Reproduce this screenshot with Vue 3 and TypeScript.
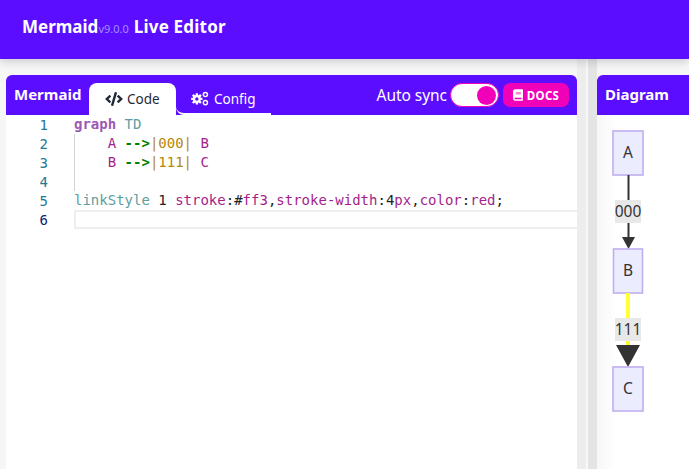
<script setup lang="ts">
interface Tok { t: string; c: string }
const lines: { n: number; toks: Tok[]; active?: boolean }[] = [
  { n: 1, toks: [{ t: 'graph', c: 'kw' }, { t: ' ', c: '' }, { t: 'TD', c: 'teal' }] },
  { n: 2, toks: [{ t: '    ', c: '' }, { t: 'A', c: 'node' }, { t: ' ', c: '' }, { t: '-->', c: 'arrow' }, { t: '|000|', c: 'label' }, { t: ' ', c: '' }, { t: 'B', c: 'node' }] },
  { n: 3, toks: [{ t: '    ', c: '' }, { t: 'B', c: 'node' }, { t: ' ', c: '' }, { t: '-->', c: 'arrow' }, { t: '|111|', c: 'label' }, { t: ' ', c: '' }, { t: 'C', c: 'node' }] },
  { n: 4, toks: [] },
  { n: 5, toks: [{ t: 'linkStyle', c: 'teal' }, { t: ' 1 ', c: '' }, { t: 'stroke', c: 'node' }, { t: ':#', c: '' }, { t: 'ff3', c: 'node' }, { t: ',', c: '' }, { t: 'stroke-width', c: 'node' }, { t: ':4', c: '' }, { t: 'px', c: 'node' }, { t: ',', c: '' }, { t: 'color', c: 'node' }, { t: ':', c: '' }, { t: 'red', c: 'node' }, { t: ';', c: '' }] },
  { n: 6, toks: [], active: true },
]
</script>

<template>
  <div class="page">
    <header class="navbar">
      <span class="brand">Mermaid</span><span class="version">v9.0.0</span><span class="brand brand-tail">Live Editor</span>
    </header>
    <main class="workspace">
      <section class="panel editor">
        <div class="panel-head">
          <span class="panel-title">Mermaid</span>
          <div class="tabs">
            <div class="tab active">
              <svg class="ico code-ico" viewBox="0 0 640 512" aria-hidden="true"><path d="M278.9 511.5l-61-17.7c-6.4-1.8-10-8.5-8.2-14.9L346.2 8.7c1.8-6.4 8.5-10 14.9-8.2l61 17.7c6.4 1.8 10 8.5 8.2 14.9L293.8 503.3c-1.9 6.4-8.5 10.1-14.9 8.2zm-114-112.2l43.5-46.4c4.6-4.9 4.3-12.7-.8-17.2L117 256l90.6-79.7c5.1-4.5 5.5-12.3.8-17.2l-43.5-46.4c-4.5-4.8-12.1-5.1-17-.5L3.8 247.2c-5.1 4.7-5.1 12.8 0 17.5l144.1 135.1c4.9 4.6 12.5 4.4 17-.5zm327.2.6l144.1-135.1c5.1-4.7 5.1-12.8 0-17.5L492.1 112.1c-4.8-4.5-12.4-4.3-17 .5L431.6 159c-4.6 4.9-4.3 12.7.8 17.2L523 256l-90.6 79.7c-5.1 4.5-5.5 12.3-.8 17.2l43.5 46.4c4.5 4.9 12.1 5.1 17 .6z"/></svg>
              <span>Code</span>
            </div>
            <div class="tab inactive">
              <svg class="ico cog-ico" viewBox="0 0 20 16" aria-hidden="true">
                <g fill="#fff">
                  <circle cx="6.500" cy="8.500" r="4.400"/>
                  <g stroke="#fff" stroke-width="2.600" stroke-linecap="butt">
                    <path d="M6.500 2.200v12.600M.2 8.500h12.600M2 4l9 9M11 4l-9 9"/>
                  </g>
                </g>
                <circle cx="6.500" cy="8.500" r="1.900" fill="#5a0dff"/>
                <circle cx="16" cy="3.600" r="2.300" fill="none" stroke="#fff" stroke-width="1.600"/>
                <circle cx="16" cy="12.600" r="2.300" fill="none" stroke="#fff" stroke-width="1.600"/>
              </svg>
              <span>Config</span>
            </div>
          </div>
          <div class="head-tools">
            <span class="sync-label">Auto sync</span>
            <span class="toggle"><span class="knob"></span></span>
            <button class="docs" type="button">
              <svg class="book" viewBox="0 0 448 512" aria-hidden="true"><path d="M448 360V24c0-13.300-10.700-24-24-24H96C43 0 0 43 0 96v320c0 53 43 96 96 96h328c13.300 0 24-10.700 24-24v-16c0-7.500-3.500-14.300-8.900-18.700-4.200-15.400-4.200-59.300 0-74.700 5.400-4.300 8.900-11.100 8.900-18.600zM128 134c0-3.300 2.700-6 6-6h212c3.300 0 6 2.700 6 6v20c0 3.300-2.700 6-6 6H134c-3.300 0-6-2.700-6-6v-20zm0 64c0-3.300 2.700-6 6-6h212c3.300 0 6 2.700 6 6v20c0 3.300-2.700 6-6 6H134c-3.300 0-6-2.700-6-6v-20zm253.400 250H96c-17.700 0-32-14.300-32-32 0-17.600 14.400-32 32-32h285.400c-1.900 17.100-1.900 46.900 0 64z"/></svg>
              <span>DOCS</span>
            </button>
          </div>
        </div>
        <div class="code">
          <div v-for="l in lines" :key="l.n" class="line" :class="{ current: l.active }">
            <span class="num">{{ l.n }}</span>
            <span class="content">
              <span class="guide" v-if="l.n >= 2 && l.n <= 4"></span>
              <span v-for="(k, i) in l.toks" :key="i" :class="k.c">{{ k.t }}</span>
            </span>
          </div>
        </div>
      </section>
      <div class="splitter"><span class="handle"></span></div>
      <section class="panel diagram">
        <div class="panel-head diagram-head">
          <span class="panel-title">Diagram</span>
        </div>
        <div class="canvas">
          <svg class="graph" width="34" height="284" viewBox="0 0 34 284" aria-label="flowchart">
            <rect x="1" y="1" width="30" height="44" fill="#ececff" stroke="#c0aef0" stroke-width="1.600"/>
            <text x="16" y="28" class="nl">A</text>
            <path d="M16.500 45V70" stroke="#333" stroke-width="2"/>
            <rect x="3" y="70" width="26" height="23" fill="#e8e8e8"/>
            <text x="16" y="87" class="nl">000</text>
            <path d="M16.500 93V108" stroke="#333" stroke-width="2"/>
            <path d="M10 107h13l-6.500 12z" fill="#333"/>
            <rect x="1.500" y="119" width="29" height="44" fill="#ececff" stroke="#c0aef0" stroke-width="1.600"/>
            <text x="16" y="146" class="nl">B</text>
            <path d="M16 163V216" stroke="#ffff33" stroke-width="4"/>
            <rect x="3" y="188" width="26" height="23" fill="#e8e8e8"/>
            <text x="16" y="205" class="nl">111</text>
            <path d="M4 215h24l-12 22z" fill="#333"/>
            <rect x="1" y="237" width="30" height="44" fill="#ececff" stroke="#c0aef0" stroke-width="1.600"/>
            <text x="16" y="264" class="nl">C</text>
          </svg>
        </div>
      </section>
    </main>
  </div>
</template>

<style>
html, body { margin: 0; padding: 0; background: #fff; overflow: hidden; }
</style>

<style scoped>
.page { width: 689px; height: 469px; display: flex; flex-direction: column; overflow: hidden; background: #f6f6f6; font-family: "Noto Sans", "Open Sans", sans-serif; }
.navbar { height: 59px; flex: none; background: #5a0dff; color: #fff; display: flex; align-items: baseline; padding: 15px 0 0 22px; box-sizing: border-box; box-shadow: 0 2px 9px rgba(0,0,0,.2); position: relative; }
.brand { font-size: 17px; font-weight: 700; line-height: 24px; }
.version { font-size: 11px; color: #a98cff; margin-left: 0; }
.brand-tail { margin-left: 5px; letter-spacing: .2px; }
.workspace { flex: 1; display: flex; padding: 16px 0 0 6px; min-height: 0; }
.panel { display: flex; flex-direction: column; background: #fff; }
.editor { width: 571px; flex: none; border-radius: 6px 6px 0 0; }
.panel-head { height: 40px; flex: none; background: #5a0dff; color: #fff; display: flex; align-items: flex-end; border-radius: 6px 6px 0 0; box-sizing: border-box; }
.panel-title { font-size: 15px; font-weight: 700; align-self: center; margin-left: 8px; margin-top: -2px; width: 75px; white-space: nowrap; }
.tabs { display: flex; align-self: flex-end; }
.tab { height: 32px; display: flex; align-items: center; box-sizing: border-box; font-size: 13.500px; padding-bottom: 1px; }
.tab.active { width: 87px; background: #fff; color: #1f2937; border-radius: 8px 8px 0 0; padding-left: 16px; gap: 4px; }
.tab.inactive { width: 95px; padding-left: 15px; gap: 5px; color: #fff; border-bottom: 2px solid #fff; border-bottom-left-radius: 8px; padding-top: 2px; }
.ico { display: block; flex: none; }
.code-ico { width: 18px; height: 14px; fill: #1f2937; }
.cog-ico { width: 18px; height: 15px; }
.head-tools { margin-left: auto; align-self: center; display: flex; align-items: center; padding-right: 8px; }
.sync-label { font-size: 15.500px; font-weight: 400; margin-right: 3px; letter-spacing: -.05px; }
.toggle { width: 47px; height: 22px; border-radius: 12px; background: #fff; border: 1px solid #f000b8; display: flex; align-items: center; justify-content: flex-end; margin-right: 4px; }
.knob { width: 19px; height: 19px; margin-right: 2px; border-radius: 50%; background: #f000b8; }
.docs { height: 24px; width: 66px; border: 0; padding: 0; background: #f000b8; color: #fff; border-radius: 7px; display: flex; align-items: center; justify-content: center; gap: 4px; font-family: inherit; font-size: 11.500px; font-weight: 700; letter-spacing: .3px; }
.book { width: 10px; height: 12px; fill: #fff; }
.code { flex: 1; padding-top: 1px; font-family: "DejaVu Sans Mono", monospace; font-size: 14px; line-height: 19px; color: #222; }
.line { height: 19px; display: flex; white-space: pre; }
.num { width: 42px; flex: none; text-align: right; color: #237893; font-size: 14px; }
.line.current .num { color: #0b216f; }
.content { margin: -1px 0 1px 26px; flex: 1; position: relative; box-sizing: border-box; }
.line.current .content { border: 2px solid #eeeeee; border-right: 0; }
.guide { position: absolute; left: 0; top: 0; bottom: 0; width: 1px; background: #d3d3d3; }
.kw { color: #9b59b6; font-weight: 700; }
.teal { color: #5f9ea0; }
.node { color: #a31f8a; }
.arrow { color: #008000; font-weight: 700; }
.label { color: #b8860b; }
.splitter { width: 20px; flex: none; display: flex; justify-content: flex-start; margin-top: -16px; background: linear-gradient(90deg, #ededed 0, #ededed 9px, #f8f8f8 9px, #f8f8f8 11px, #e4e4e4 11px, #e4e4e4 100%); }
.handle { width: 0; }
.diagram { flex: 1; min-width: 0; border-radius: 6px 0 0 0; }
.diagram-head { border-radius: 6px 0 0 0; }
.canvas { flex: 1; padding: 15px 0 0 15px; background: linear-gradient(90deg, #f7f7f7, #fff 20px); }
.graph { display: block; }
.nl { font-family: "Noto Sans", sans-serif; font-size: 15.500px; text-anchor: middle; fill: #333; }
</style>
